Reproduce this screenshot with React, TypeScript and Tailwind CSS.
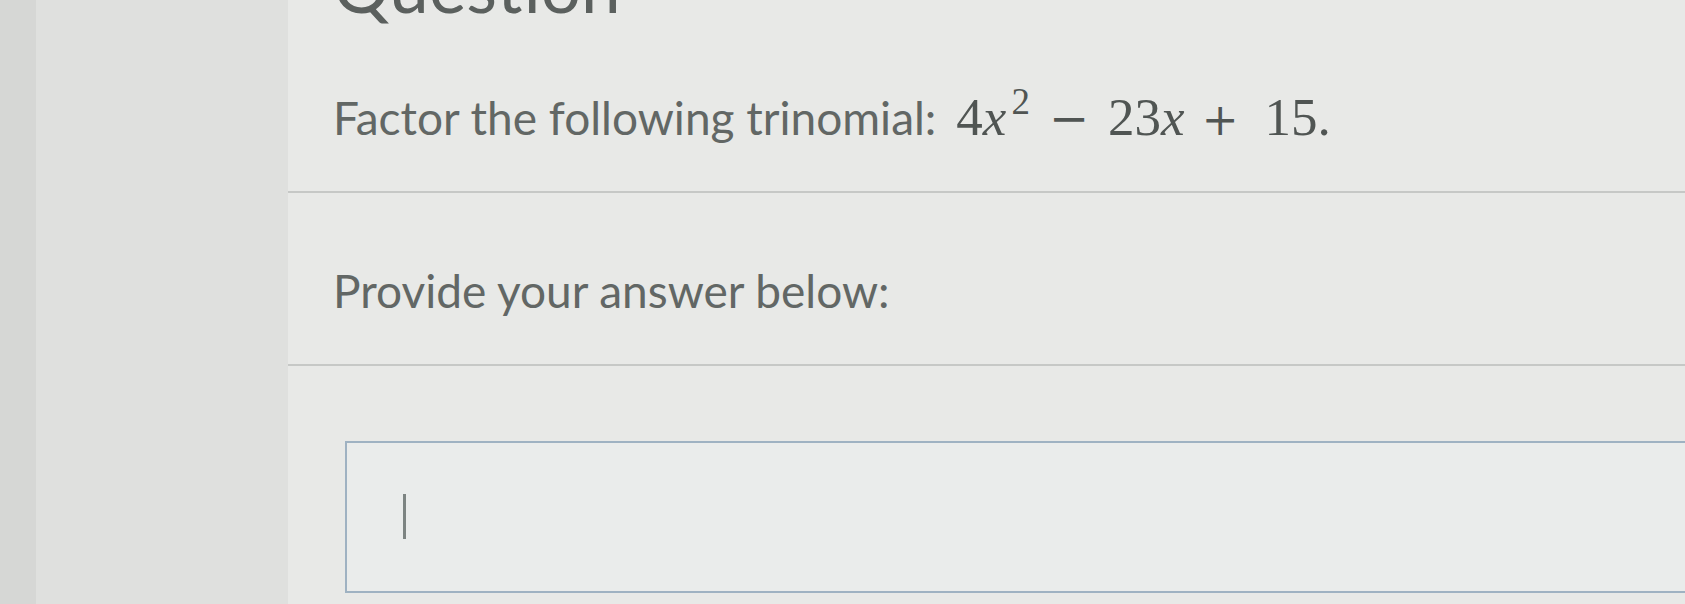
import React from 'react';

const Math: React.FC = () => (
  <span className="ml-[20px] font-['Liberation_Serif',serif] text-[53px] leading-none text-[#505553]">
    4<i className="pr-[3px]">x</i>
    <sup className="relative -top-[21px] ml-[2px] align-baseline text-[37px] leading-none">2</sup>
    <span className="ml-[19px] mr-[19px] font-['DejaVu_Serif',serif] text-[48px]">−</span>
    23<i className="pr-[4px]">x</i>
    <span className="ml-[13px] mr-[26px] font-['DejaVu_Serif',serif] text-[44px]">+</span>
    15.
  </span>
);

const App: React.FC = () => {
  return (
    <div className="flex h-[604px] w-full overflow-hidden bg-[#e8e9e7] font-['Lato','Open_Sans',sans-serif] text-[#626765]">
      <div className="w-[36px] shrink-0 bg-[#d6d7d5]" />
      <aside className="w-[252px] shrink-0 bg-[#dfe0de]" />
      <main className="min-w-0 flex-1 overflow-hidden">
        <h1 className="-mt-[50px] pl-[45px] text-[71px] leading-none text-[#5b605e]">Question</h1>
        <div className="border-b-2 border-[#c6c8c6] pl-[45px] pt-[70px] pb-[47px]">
          <p className="whitespace-nowrap text-[46px] leading-none">
            Factor the following trinomial:
            <Math />
          </p>
        </div>
        <div className="border-b-2 border-[#c6c8c6] pl-[45px] pt-[75px] pb-[50px]">
          <p className="text-[46px] leading-none">Provide your answer below:</p>
        </div>
        <div className="pl-[57px] pt-[75px]">
          <div className="h-[152px] w-[1500px] border-2 border-[#9fb2c2] bg-[#eaeceb] pl-[56px] pt-[51px]">
            <div className="h-[45px] w-[3px] bg-[#7d8482]" />
          </div>
        </div>
      </main>
    </div>
  );
};

export default App;
